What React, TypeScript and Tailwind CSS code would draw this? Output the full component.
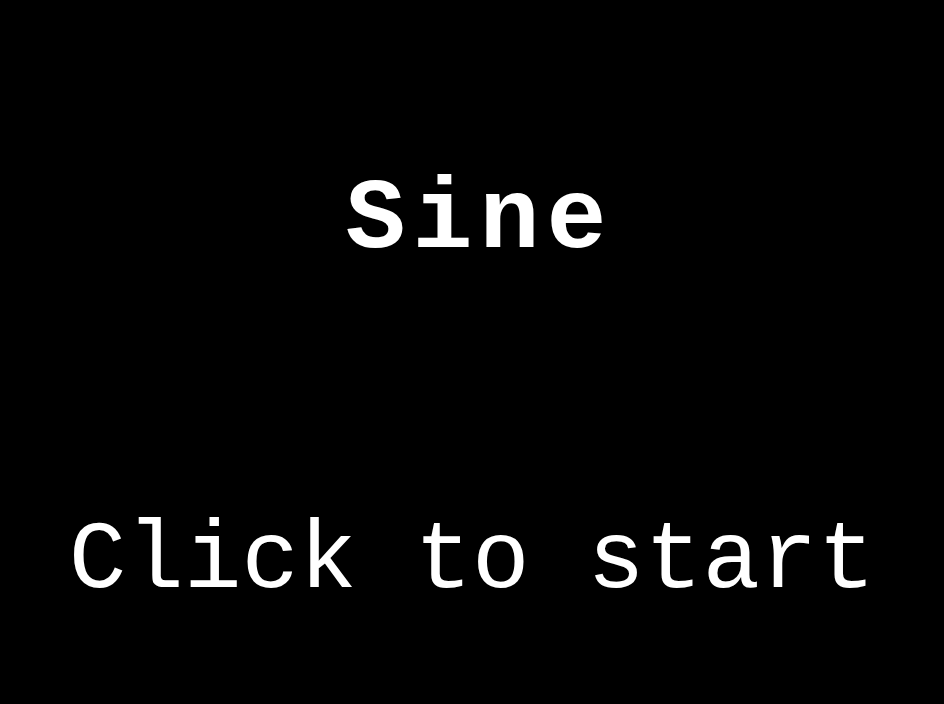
export default function App() {
  return (
    <div className="flex h-screen w-full flex-col items-center bg-black text-white font-['Liberation_Mono',monospace]">
      <h1 className="mt-[171px] pl-[15px] text-[100px] font-bold leading-none tracking-[7px]">Sine</h1>
      <p className="mt-[243px] text-[96px] leading-none">Click to start</p>
    </div>
  );
}
